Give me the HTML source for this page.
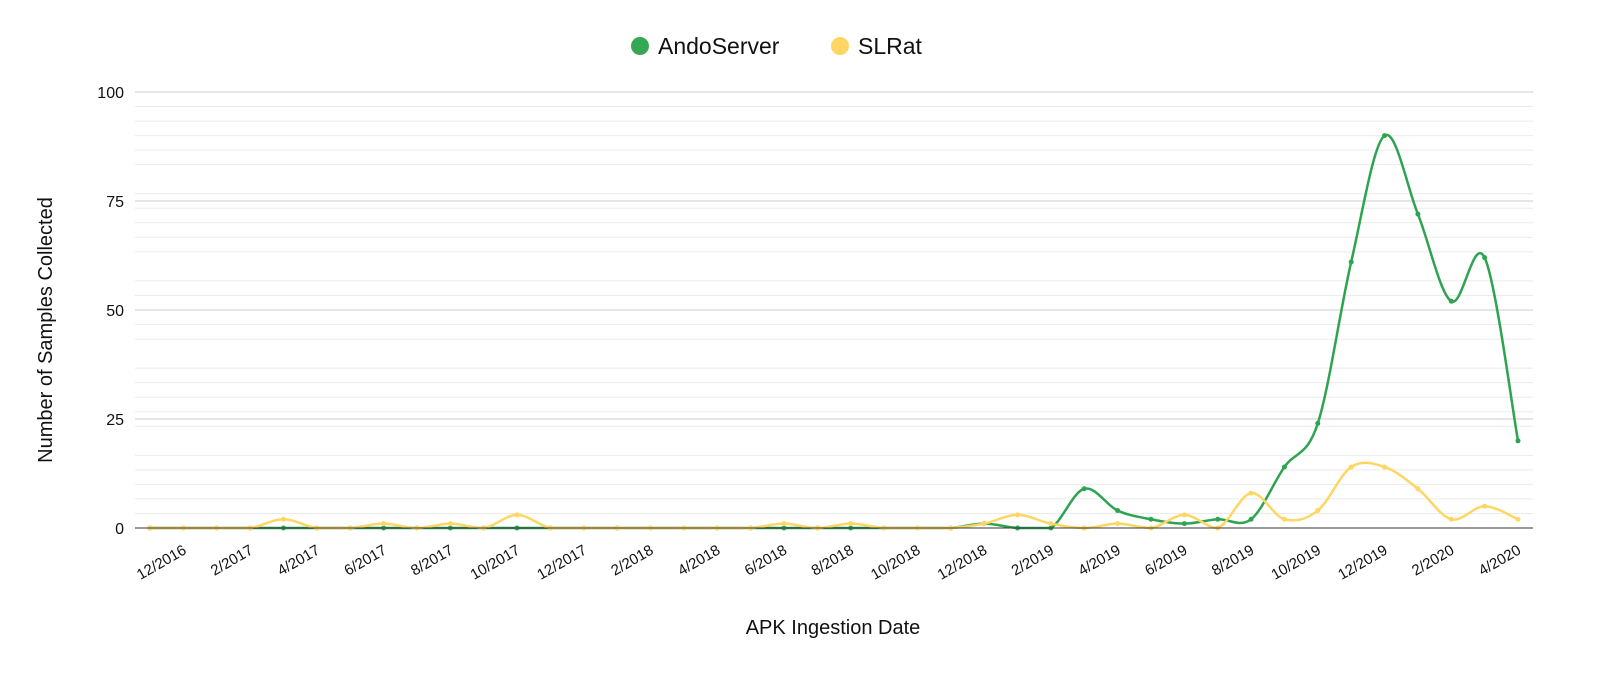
<!DOCTYPE html>
<html><head><meta charset="utf-8"><style>
html,body{margin:0;padding:0;background:#fff;width:1600px;height:686px;overflow:hidden}
svg{display:block;font-family:"Liberation Sans",Arial,sans-serif}
</style></head><body>
<svg id="c" width="1600" height="686" xmlns="http://www.w3.org/2000/svg">
<circle cx="640" cy="46" r="9" fill="#34a853"/>
<text x="658" y="54" font-size="23" fill="#111">AndoServer</text>
<circle cx="840" cy="46" r="9" fill="#fdd663"/>
<text x="858" y="54" font-size="23" fill="#111">SLRat</text>
<text x="833" y="634" font-size="20" fill="#111" text-anchor="middle">APK Ingestion Date</text>
<text transform="translate(52,330) rotate(-90)" font-size="20" fill="#111" text-anchor="middle">Number of Samples Collected</text>
<g id="g"></g>
</svg>
<script>
var ns="http://www.w3.org/2000/svg",g=document.getElementById('g');
function el(t,a,txt){var e=document.createElementNS(ns,t);for(var k in a)e.setAttribute(k,a[k]);if(txt!=null)e.textContent=txt;g.appendChild(e);return e;}
var y0=528,y1=92,X0=135,X1=1533;
function Y(v){return y0-(y0-y1)*v/100;}
for(var i=0;i<=30;i++){var yy=y1+(y0-y1)*i/30;if(i%6==0)continue;el('line',{x1:X0,x2:X1,y1:yy,y2:yy,stroke:'#ebebeb','stroke-width':1});}
for(var v=25;v<=100;v+=25){el('line',{x1:X0,x2:X1,y1:Y(v),y2:Y(v),stroke:'#cccccc','stroke-width':1});}
[0,25,50,75,100].forEach(function(v){el('text',{x:124,y:Y(v)+6,'font-size':16,fill:'#111','text-anchor':'end'},String(v));});
function X(i){return 150+i*(1518-150)/41;}
var m=11,yr=2016;
for(var i=0;i<42;i++){if(i%2==1){el('text',{transform:'translate('+(X(i)+4)+',553) rotate(-30)','font-size':15,fill:'#111','text-anchor':'end'},m+'/'+yr);}m++;if(m>12){m=1;yr++;}}
var A=[],S=[];for(var i=0;i<42;i++){A[i]=0;S[i]=0;}
A[25]=1;A[28]=9;A[29]=4;A[30]=2;A[31]=1;A[32]=2;A[33]=2;A[34]=14;A[35]=24;A[36]=61;A[37]=90;A[38]=72;A[39]=52;A[40]=62;A[41]=20;
var s={4:2,7:1,9:1,11:3,19:1,21:1,25:1,26:3,27:1,29:1,31:3,33:8,34:2,35:4,36:14,37:14,38:9,39:2,40:5,41:2};for(var k in s)S[k]=s[k];
function cl(y){return Math.min(y,y0);}
function path(d){var p=d.map(function(v,i){return[X(i),Y(v)];});var s='M'+p[0][0]+','+p[0][1];
for(var i=0;i<p.length-1;i++){var a=p[i-1]||p[i],b=p[i],c=p[i+1],e=p[i+2]||c;
var c1=[b[0]+(c[0]-a[0])/6,cl(b[1]+(c[1]-a[1])/6)],c2=[c[0]-(e[0]-b[0])/6,cl(c[1]-(e[1]-b[1])/6)];
s+=' C'+c1+' '+c2+' '+c;}return s;}
function series(d,col){el('path',{d:path(d),fill:'none',stroke:col,'stroke-width':2.5});d.forEach(function(v,i){el('circle',{cx:X(i),cy:Y(v),r:2.5,fill:col});});}
series(A,'#2ea350');
series(S,'#fdd663');
el('line',{x1:X0,x2:X1,y1:y0,y2:y0,stroke:'#333','stroke-width':1});
</script>
</body></html>
